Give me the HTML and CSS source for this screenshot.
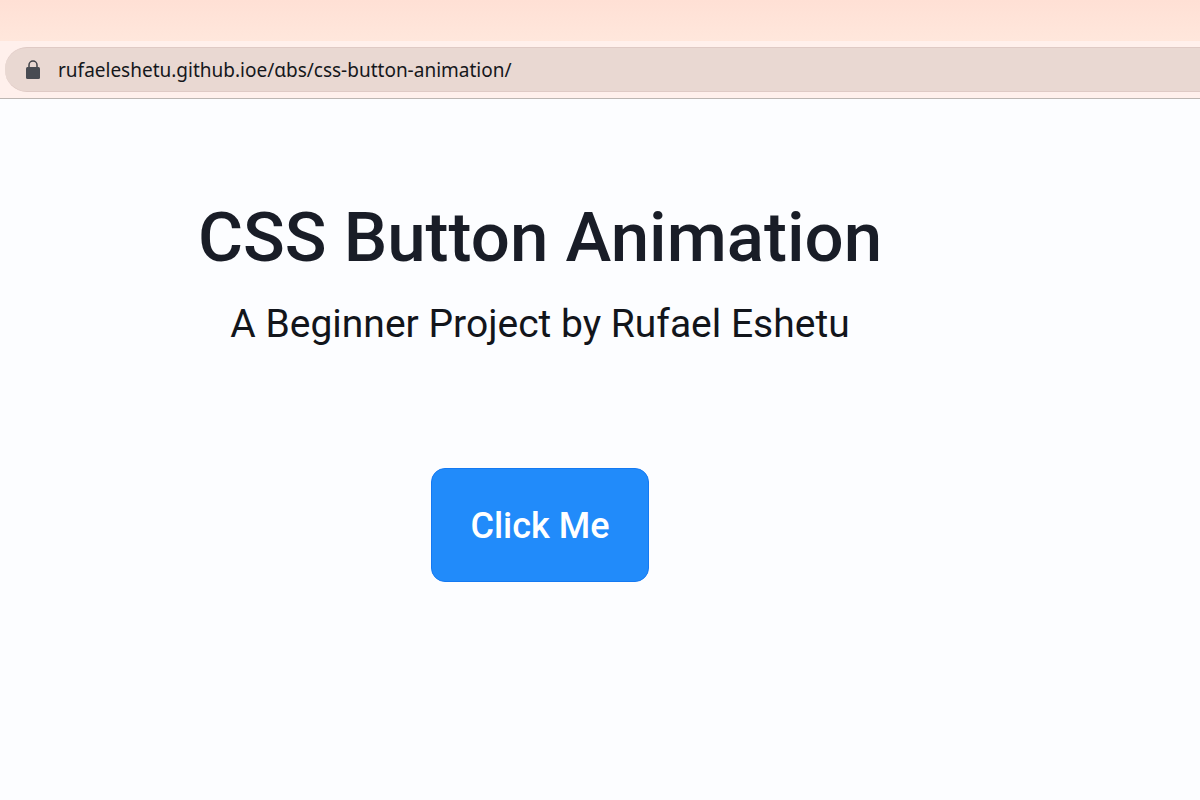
FILE: index.html
```html
<!DOCTYPE html>
<html lang="en">
<head>
    <meta charset="UTF-8">
    <meta name="viewport" content="width=device-width, initial-scale=1.0">
    <title>CSS Button Animation</title>
    <link rel="stylesheet" href="styles.css">
</head>
<body>
    <header class="browser">
        <div class="tab-strip"></div>
        <div class="toolbar">
            <div class="address-bar">
                <svg class="lock" viewBox="0 0 16 20" aria-hidden="true">
                    <path d="M4 9V5a4 4 0 0 1 8 0V9" fill="none" stroke="#3f4147" stroke-width="1.5" />
                    <rect x="1" y="7" width="14" height="12" rx="1.5" fill="#484b52" />
                </svg>
                <input class="address" type="text" aria-label="Address" value="rufaeleshetu.github.ioe/ɑbs/css-button-animation/">
            </div>
        </div>
    </header>

    <main class="container">
        <h1>CSS Button Animation</h1>
        <p class="subtitle">A Beginner Project by Rufael Eshetu</p>
        <button class="btn" type="button">Click Me</button>
    </main>
</body>
</html>
```

FILE: styles.css
```css
* {
    box-sizing: border-box;
}

body {
    font-family: Roboto, Arial, sans-serif;
    margin: 0;
    background: #fcfdff;
    color: #12151b;
}

/* Browser bar */
.tab-strip {
    height: 41px;
    background: linear-gradient(#ffe0d5, #ffe7dc);
}

.toolbar {
    padding: 6px 0 6px 5px;
    background: #fff0ec;
    border-bottom: 1px solid #bdb6b2;
}

.address-bar {
    display: flex;
    align-items: center;
    gap: 17px;
    height: 45px;
    padding-left: 20px;
    background: #e9d8d2;
    border-top: 1px solid #dfcac5;
    border-bottom: 1px solid #dfcac5;
    border-radius: 22px 0 0 22px;
}

.lock {
    width: 16px;
    height: 20px;
}

.address {
    flex: 1;
    min-width: 0;
    padding: 0;
    border: none;
    outline: none;
    background: none;
    color: #15171b;
    font-family: "Noto Sans", "Open Sans", sans-serif;
    font-size: 19px;
}

/* Page content */
.container {
    display: flex;
    flex-direction: column;
    align-items: center;
    width: 90%;
    padding: 94px 20px 40px;
    text-align: center;
}

h1 {
    margin: 0;
    color: #191d27;
    font-size: 69px;
    font-weight: 500;
    line-height: 90px;
}

.subtitle {
    margin: 16px 0 0;
    font-size: 39px;
    line-height: 50px;
}

.btn {
    margin-top: 119px;
    padding: 33px 38px 31px;
    border: 1px solid #1479f2;
    border-radius: 14px;
    background: #218bfa;
    color: #fff;
    font-family: inherit;
    font-size: 36px;
    font-weight: 500;
    line-height: 48px;
    cursor: pointer;
    transition: background 0.3s, transform 0.2s;
}

.btn:hover {
    background: #1479f2;
    transform: scale(1.05);
}
```
